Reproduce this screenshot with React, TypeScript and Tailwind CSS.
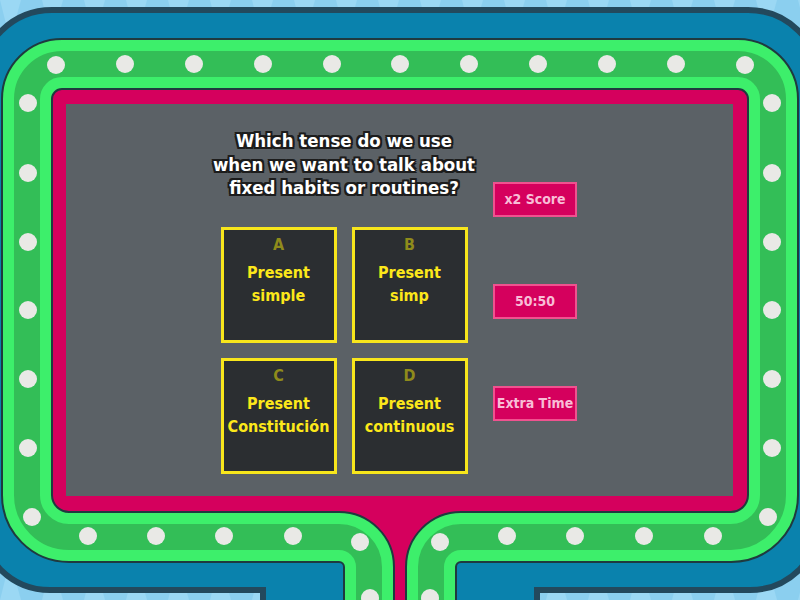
import React from 'react'

// centre points of the light bulbs running along the green band
const BULBS: [number, number][] = [
  // top row
  [56, 65], [125, 64], [194, 64], [263, 64], [332, 64], [400, 64], [469, 64], [538, 64], [607, 64], [676, 64], [745, 65],
  // left column
  [28, 103], [28, 173], [28, 242], [28, 310], [28, 379], [28, 448], [32, 517],
  // right column
  [772, 103], [772, 173], [772, 242], [772, 310], [772, 379], [772, 448], [768, 517],
  // bottom left + neck
  [88, 536], [156, 536], [224, 536], [293, 536], [360, 542], [370, 598],
  // bottom right + neck
  [440, 542], [507, 536], [575, 536], [644, 536], [713, 536], [430, 598],
]

const BAND =
  'M 369 620 V 567 A 30 30 0 0 0 339 537 H 69 A 42 42 0 0 1 27 495 V 99 A 35 35 0 0 1 62 64 H 738 A 35 35 0 0 1 773 99 V 495 A 42 42 0 0 1 731 537 H 461 A 30 30 0 0 0 431 567 V 620'

const ANSWERS = [
  { letter: 'A', lines: ['Present', 'simple'] },
  { letter: 'B', lines: ['Present', 'simp'] },
  { letter: 'C', lines: ['Present', 'Constitución'] },
  { letter: 'D', lines: ['Present', 'continuous'] },
]

const POWER_UPS = ['x2 Score', '50:50', 'Extra Time']

function Frame() {
  return (
    <svg className="absolute inset-0" width={800} height={600} viewBox="0 0 800 600">
      <rect width={800} height={600} fill="#8bcfef" />
      {/* faint backdrop pattern */}
      {Array.from({ length: 20 }).map((_, i) => (
        <path key={i} d={`M ${i * 42} 0 L ${i * 42 + 21} 0 L ${i * 42 + 10} 40 Z`} fill="#9bd8f4" />
      ))}
      {Array.from({ length: 20 }).map((_, i) => (
        <path key={`b${i}`} d={`M ${i * 42} 600 L ${i * 42 + 21} 600 L ${i * 42 + 10} 560 Z`} fill="#9bd8f4" />
      ))}

      {/* blue outer casing */}
      <path
        d="M -20 82 A 72 72 0 0 1 52 10 H 748 A 72 72 0 0 1 820 82 V 520 A 70 70 0 0 1 750 590 H 537 V 620 H 263 V 590 H 50 A 70 70 0 0 1 -20 520 Z"
        fill="#0a82ad"
        stroke="#23495d"
        strokeWidth={6}
      />

      {/* pink screen surround and neck */}
      <rect x={40} y={80} width={720} height={440} fill="#d5005d" />
      <path d="M 346 500 H 454 V 567 H 415 V 610 H 385 V 567 H 346 Z" fill="#d5005d" />

      {/* green bulb band */}
      <path d={BAND} fill="none" stroke="#1f3a3f" strokeWidth={52} strokeLinejoin="round" />
      <path d={BAND} fill="none" stroke="#3def6b" strokeWidth={48} strokeLinejoin="round" />
      <path d={BAND} fill="none" stroke="#33be57" strokeWidth={26} strokeLinejoin="round" />
      {BULBS.map(([x, y], i) => (
        <circle key={i} cx={x} cy={y} r={9} fill="#e9e9e6" />
      ))}
    </svg>
  )
}

function AnswerCard({ letter, lines }: { letter: string; lines: string[] }) {
  return (
    <div className="w-[116px] h-[116px] border-[3px] border-[#f8e61c] bg-[#2b2e31] flex flex-col items-center pt-[6px]">
      <span className="text-[16px] leading-[18px] font-bold text-[#8f8b1b]">{letter}</span>
      <div className="mt-[7px] text-center text-[16px] leading-[23px] font-bold text-[#fce81a]">
        {lines.map(l => (
          <div key={l} className="whitespace-nowrap">{l}</div>
        ))}
      </div>
    </div>
  )
}

export default function App() {
  return (
    <div className="relative w-[800px] h-[600px] overflow-hidden font-['DejaVu_Sans_Condensed','DejaVu_Sans',sans-serif]">
      <Frame />
      <div className="relative pt-[104px] pl-[66px]">
        <div className="w-[667px] h-[392px] bg-[#5b6166] flex">
          {/* question + answers */}
          <div className="ml-[138px] w-[280px] pt-[25px] flex flex-col items-center">
            <p className="text-center text-[18.5px] leading-[23.5px] font-bold text-white [text-shadow:-2px_-2px_0_#1c1c1c,2px_-2px_0_#1c1c1c,-2px_2px_0_#1c1c1c,2px_2px_0_#1c1c1c,0_-2px_0_#1c1c1c,0_2px_0_#1c1c1c,-2px_0_0_#1c1c1c,2px_0_0_#1c1c1c]">
              Which tense do we use
              <br />
              when we want to talk about
              <br />
              fixed habits or routines?
            </p>
            <div className="mt-[27px] grid grid-cols-[116px_116px] gap-[15px]">
              {ANSWERS.map(a => (
                <AnswerCard key={a.letter} letter={a.letter} lines={a.lines} />
              ))}
            </div>
          </div>

          {/* power-ups */}
          <div className="ml-[9px] pt-[78px] flex flex-col gap-[67px]">
            {POWER_UPS.map(p => (
              <button
                key={p}
                type="button"
                className="w-[84px] h-[35px] border-2 border-[#f0528f] bg-[#d5005d] text-[14px] font-bold text-[#f8bdd6] whitespace-nowrap"
              >
                {p}
              </button>
            ))}
          </div>
        </div>
      </div>
    </div>
  )
}
